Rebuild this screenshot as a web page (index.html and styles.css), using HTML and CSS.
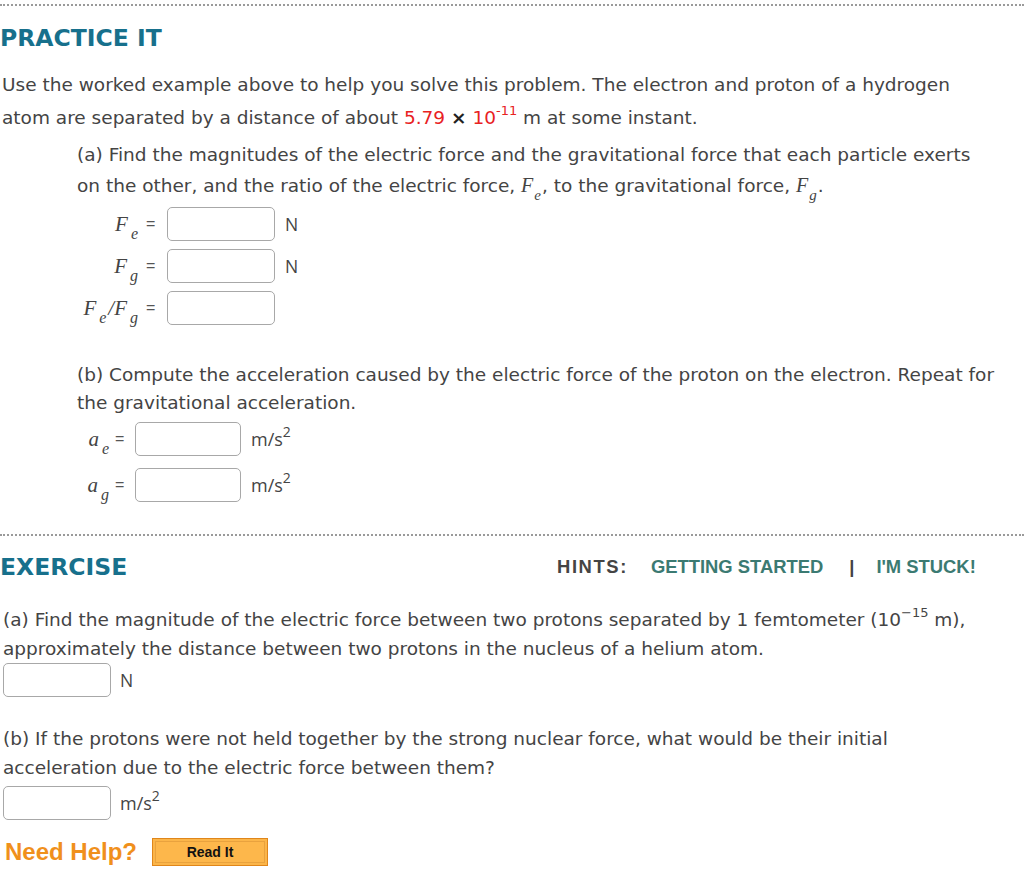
FILE: index.html
```html
<!DOCTYPE html>
<html>
<head>
<meta charset="utf-8">
<link rel="stylesheet" href="styles.css">
</head>
<body>
<div class="rule"></div>
<section class="practice">
  <h2 class="title">PRACTICE IT</h2>
  <p class="intro">Use the worked example above to help you solve this problem. The electron and proton of a hydrogen<br>atom are separated by a distance of about <span class="red">5.79</span> <b class="times">&times;</b> <span class="red">10<sup>-11</sup></span> m at some instant.</p>
  <div class="part">
    <p class="q">(a) Find the magnitudes of the electric force and the gravitational force that each particle exerts<br>on the other, and the ratio of the electric force, <i class="m">F<sub>e</sub></i>, to the gravitational force, <i class="m">F<sub>g</sub></i>.</p>
    <div class="fields fa">
      <div class="lbl"><i class="m">F<sub>e</sub></i></div><div class="eq">=</div><div class="box"></div><div class="unit">N</div>
      <div class="lbl"><i class="m">F<sub>g</sub></i></div><div class="eq">=</div><div class="box"></div><div class="unit">N</div>
      <div class="lbl"><i class="m">F<sub>e</sub>/F<sub>g</sub></i></div><div class="eq">=</div><div class="box"></div><div class="unit"></div>
    </div>
    <p class="q qb">(b) Compute the acceleration caused by the electric force of the proton on the electron. Repeat for<br>the gravitational acceleration.</p>
    <div class="fields fb">
      <div class="lbl"><i class="m">a<sub>e</sub></i></div><div class="eq">=</div><div class="box"></div><div class="unit unit-ms">m/s<sup>2</sup></div>
      <div class="lbl"><i class="m">a<sub>g</sub></i></div><div class="eq">=</div><div class="box"></div><div class="unit unit-ms">m/s<sup>2</sup></div>
    </div>
  </div>
</section>
<div class="rule rule2"></div>
<section class="exercise">
  <div class="ex-head">
    <h2 class="title">EXERCISE</h2>
    <div class="hints"><span class="hl">HINTS:</span><span class="hlink">GETTING STARTED</span><span class="sep">|</span><span class="hlink">I'M STUCK!</span></div>
  </div>
  <p class="eq-text">(a) Find the magnitude of the electric force between two protons separated by 1 femtometer (10<sup>&minus;15</sup> m),<br>approximately the distance between two protons in the nucleus of a helium atom.</p>
  <div class="answer"><div class="box"></div><span class="unit">N</span></div>
  <p class="eq-text eb">(b) If the protons were not held together by the strong nuclear force, what would be their initial<br>acceleration due to the electric force between them?</p>
  <div class="answer answer2"><div class="box"></div><span class="unit unit-ms">m/s<sup>2</sup></span></div>
  <div class="help"><span class="need">Need Help?</span><span class="readit">Read It</span></div>
</section>
</body>
</html>
```
FILE: styles.css
```css
body {
  margin: 0;
  font-family: "DejaVu Sans", Verdana, sans-serif;
  font-size: 18.5px;
  color: #444;
  background: #fff;
}
.rule {
  border-top: 2px dotted #9a9a9a;
  margin-top: 4px;
}
.title {
  margin: 0;
  font-size: 23.5px;
  font-weight: bold;
  color: #17708c;
  line-height: 28px;
}
.practice .title {
  padding: 18px 0 0 0;
}
.intro {
  margin: 16px 0 0 2px;
  line-height: 33px;
  white-space: nowrap;
}
.red { color: #e8221f; }
.times { color: #222; }
sup { font-size: 13px; line-height: 0; vertical-align: 9px; }
.part { padding-left: 77px; }
.q {
  margin: 6px 0 0 0;
  line-height: 30px;
  white-space: nowrap;
}
.m {
  font-family: "Liberation Serif", "Times New Roman", serif;
  font-size: 20px;
  color: #444;
}
.m sub { font-size: 15px; vertical-align: -8px; line-height: 0; margin-left: 1px; margin-right: 1px; }
.lbl .m { font-size: 21px; }
.lbl .m sub { font-size: 16px; margin-left: 3px; margin-right: 2px; }
.fields {
  display: grid;
  grid-template-columns: 63px 27px 108px auto;
  align-items: center;
  row-gap: 8px;
  margin-top: 6px;
}
.lbl { text-align: right; white-space: nowrap; }
.eq {
  font-family: "Liberation Sans", Arial, sans-serif;
  font-size: 16px;
  color: #555;
  padding-left: 6px;
}
.box {
  border: 1px solid #a8a8a8;
  border-radius: 5px;
  box-sizing: border-box;
  height: 34px;
  background: #fff;
}
.fa .box { width: 108px; }
.unit {
  font-family: "Open Sans", sans-serif;
  font-size: 17.5px;
  color: #444;
  padding-left: 10px;
}
.unit-ms { font-size: 18px; }
.unit-ms sup { font-size: 14px; vertical-align: 9px; }
.qb { margin-top: 36px; line-height: 28px; }
.fb { grid-template-columns: 34px 24px 106px auto; margin-top: 5px; row-gap: 12px; }
.fb .eq { padding-left: 4px; }
.rule2 { margin-top: 32px; }
.ex-head {
  display: flex;
  align-items: center;
  padding-top: 17px;
}
.ex-head .title { width: 557px; }
.hints {
  font-family: "Liberation Sans", Arial, sans-serif;
  font-weight: bold;
  font-size: 18.4px;
  display: flex;
  align-items: center;
}
.hl { color: #444; margin-right: 23px; letter-spacing: 1.6px; }
.hlink { color: #3b7a72; }
.sep { color: #444; margin: 0 22px 0 26px; }
.eq-text {
  margin: 24px 0 0 3px;
  line-height: 29px;
  white-space: nowrap;
}
.answer {
  display: flex;
  align-items: center;
  margin-left: 3px;
}
.answer2 { margin-top: 4px; }
.answer .box { width: 108px; }
.answer .unit { padding-left: 9px; }
.eb { margin-top: 27px; }
.help {
  display: flex;
  align-items: center;
  margin-top: 18px;
  padding-left: 5px;
}
.need {
  font-family: "Liberation Sans", Arial, sans-serif;
  font-weight: bold;
  font-size: 24px;
  color: #f0901c;
}
.readit {
  margin-left: 15px;
  width: 116px;
  height: 28px;
  box-sizing: border-box;
  border: 1px solid #e0861a;
  box-shadow: inset 0 0 0 2px #fbb549, inset 0 0 0 3px #e9a23e;
  background: #fdb74b;
  font-family: "Liberation Sans", Arial, sans-serif;
  font-weight: bold;
  font-size: 14px;
  color: #111;
  display: flex;
  align-items: center;
  justify-content: center;
}
```
